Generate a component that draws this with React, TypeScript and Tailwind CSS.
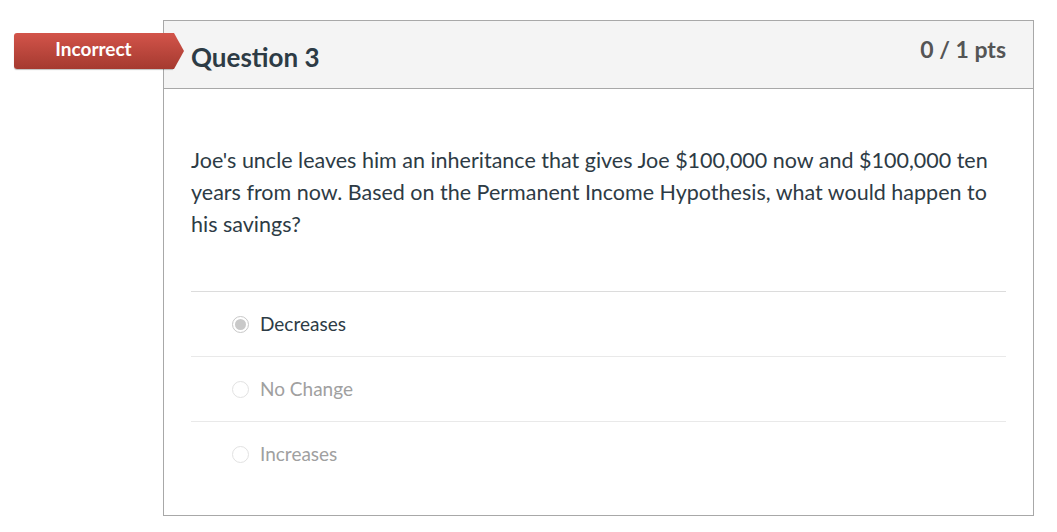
import React from "react";

const answers = [
  { label: "Decreases", selected: true },
  { label: "No Change", selected: false },
  { label: "Increases", selected: false },
];

function Radio({ selected }: { selected: boolean }) {
  return (
    <span
      className={
        "flex h-[17px] w-[17px] items-center justify-center rounded-full border " +
        (selected ? "border-[#c8c8c8] bg-white" : "border-[#e2e2e2] bg-white")
      }
    >
      {selected && <span className="h-[11px] w-[11px] rounded-full bg-[#c9c9c9]" />}
    </span>
  );
}

export default function App() {
  return (
    <div
      className="relative min-h-[532px] bg-white pl-[163px] pt-[20px]"
      style={{ fontFamily: "Lato, 'Noto Sans', sans-serif" }}
    >
      {/* status badge */}
      <div className="absolute left-[14px] top-[33px] flex h-[36px] items-center">
        <div className="flex h-full w-[159px] items-center justify-center rounded-l-[3px] bg-gradient-to-b from-[#d3544a] to-[#a53a30] pb-[4px] text-[19px] font-bold text-white shadow-[0_1px_1px_rgba(0,0,0,0.25)]">
          Incorrect
        </div>
        <svg width="11" height="36" viewBox="0 0 11 36" className="block">
          <defs>
            <linearGradient id="g" x1="0" y1="0" x2="0" y2="1">
              <stop offset="0" stopColor="#d3544a" />
              <stop offset="1" stopColor="#a53a30" />
            </linearGradient>
          </defs>
          <polygon points="0,0 1,0 11,18 1,36 0,36" fill="url(#g)" />
        </svg>
      </div>

      <div className="w-[871px] border border-[#a8a8a8]">
        <div className="flex h-[68px] justify-between border-b border-[#a8a8a8] bg-[#f4f4f4] px-[27px]">
          <h2 className="pt-[18px] text-[26px] font-bold leading-[36px] text-[#2d3b45]">Question 3</h2>
          <div className="pt-[13px] text-[23px] font-bold leading-[30px] text-[#555555]">0 / 1 pts</div>
        </div>

        <div className="px-[27px] pb-[28px] pt-[55px]">
          <p className="max-w-[802px] text-[21.5px] leading-[32px] text-[#2d3b45]">
            Joe's uncle leaves him an inheritance that gives Joe $100,000 now and $100,000 ten years from now. Based on
            the Permanent Income Hypothesis, what would happen to his savings?
          </p>

          <div className="mt-[51px] border-t border-[#dcdcdc]">
            {answers.map((a, i) => (
              <div
                key={a.label}
                className={
                  "flex h-[65px] items-center gap-[11px] pl-[41px] " +
                  (i < answers.length - 1 ? "border-b border-[#e9e9e9]" : "")
                }
              >
                <Radio selected={a.selected} />
                <span className={"text-[19px] " + (a.selected ? "text-[#2d3b45]" : "text-[#a0a0a0]")}>{a.label}</span>
              </div>
            ))}
          </div>
        </div>
      </div>
    </div>
  );
}
